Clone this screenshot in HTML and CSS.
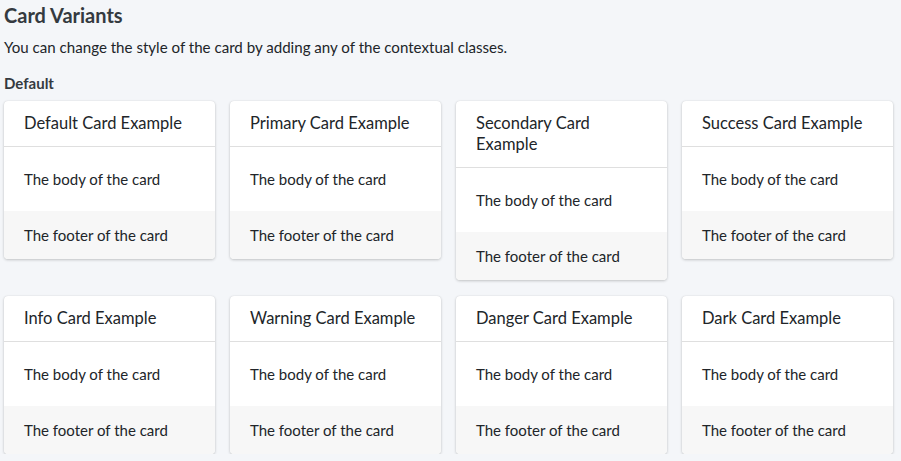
FILE: index.html
```html
<!DOCTYPE html>
<html>
<head>
<meta charset="utf-8">
<link rel="stylesheet" href="styles.css">
</head>
<body>
<div class="page">
  <h3 class="title">Card Variants</h3>
  <p class="desc">You can change the style of the card by adding any of the contextual classes.</p>
  <h5 class="section">Default</h5>
  <div class="grid">
    <div class="card"><div class="card-header">Default Card Example</div><div class="card-body">The body of the card</div><div class="card-footer">The footer of the card</div></div>
    <div class="card"><div class="card-header">Primary Card Example</div><div class="card-body">The body of the card</div><div class="card-footer">The footer of the card</div></div>
    <div class="card"><div class="card-header">Secondary Card Example</div><div class="card-body">The body of the card</div><div class="card-footer">The footer of the card</div></div>
    <div class="card"><div class="card-header">Success Card Example</div><div class="card-body">The body of the card</div><div class="card-footer">The footer of the card</div></div>
    <div class="card"><div class="card-header">Info Card Example</div><div class="card-body">The body of the card</div><div class="card-footer">The footer of the card</div></div>
    <div class="card"><div class="card-header">Warning Card Example</div><div class="card-body">The body of the card</div><div class="card-footer">The footer of the card</div></div>
    <div class="card"><div class="card-header">Danger Card Example</div><div class="card-body">The body of the card</div><div class="card-footer">The footer of the card</div></div>
    <div class="card"><div class="card-header">Dark Card Example</div><div class="card-body">The body of the card</div><div class="card-footer">The footer of the card</div></div>
  </div>
</div>
</body>
</html>
```
FILE: styles.css
```css
html, body {
  margin: 0;
  padding: 0;
  background: #f4f6f9;
}
body {
  font-family: Lato, "Liberation Sans", sans-serif;
  color: #212529;
  font-size: 16px;
  line-height: 1.5;
}
.page {
  padding: 3px 8px 0 4px;
}
.title {
  margin: 0;
  font-size: 20px;
  line-height: 24px;
  font-weight: 700;
  color: #343a40;
}
.desc {
  margin: 9px 0 0 0;
  font-size: 15.1px;
  line-height: 22px;
}
.section {
  margin: 15px 0 0 0;
  font-size: 15px;
  line-height: 20px;
  font-weight: 700;
  color: #343a40;
}
.grid {
  margin-top: 8px;
  display: grid;
  grid-template-columns: repeat(4, 211px);
  column-gap: 15px;
  row-gap: 16px;
  align-items: start;
}
.card {
  background: #fff;
  border-radius: 4px;
  box-shadow: 0 0 1px rgba(0,0,0,.125), 0 1px 3px rgba(0,0,0,.2);
  overflow: hidden;
}
.card-header {
  padding: 12px 20px;
  font-size: 16.5px;
  line-height: 21px;
  border-bottom: 1px solid rgba(0,0,0,.125);
}
.card-body {
  padding: 20px;
  font-size: 15px;
  line-height: 24px;
}
.card-footer {
  padding: 12px 20px;
  font-size: 15px;
  line-height: 24px;
  background: #f7f7f7;
}
```
